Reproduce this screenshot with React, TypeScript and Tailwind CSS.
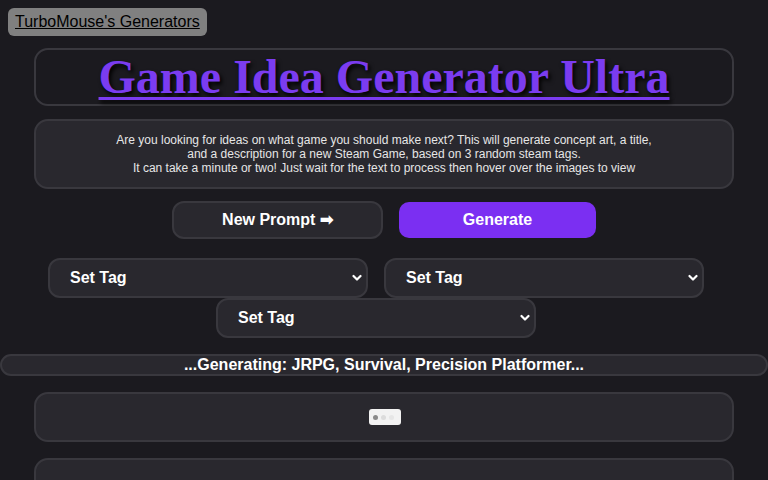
import React from "react";

const tags = ["Set Tag", "Set Tag", "Set Tag"];

function TagSelect() {
  return (
    <div className="relative mr-4 w-[320px] h-10">
      <select
        defaultValue=""
        className="appearance-none block w-full h-full rounded-xl border-2 border-[#39383e] bg-[#29282e] pl-5 text-base font-bold text-white outline-none"
      >
        <option value="">Set Tag</option>
      </select>
      {/* chevron overlay */}
      <svg
        className="pointer-events-none absolute right-[6px] top-[16px]"
        width="10"
        height="8"
        viewBox="0 0 10 8"
      >
        <path d="M1.5 2 L5 5.5 L8.5 2" fill="none" stroke="#fff" strokeWidth="2.2" strokeLinecap="round" strokeLinejoin="round" />
      </svg>
    </div>
  );
}

export default function App() {
  return (
    <div className="min-h-screen bg-[#1b1a1f] p-2 font-['Liberation_Sans',Arial,sans-serif] text-white">
      {/* ── Home link ─────────────────────────────────────────── */}
      <a
        href="#"
        className="inline-block h-7 rounded-md bg-[#808080] px-[7px] text-base leading-7 text-black underline"
      >
        TurboMouse's Generators
      </a>

      {/* ── Title ─────────────────────────────────────────────── */}
      <div className="mx-auto mt-3 w-[700px] rounded-[14px] border-2 border-[#39383e] text-center">
        <a
          href="#"
          className="font-['Liberation_Serif','Times_New_Roman',serif] text-5xl font-bold leading-[54px] text-[#7b3cf0] underline decoration-[3px] underline-offset-[4px] [text-shadow:2px_3px_4px_#000]"
        >
          Game Idea Generator Ultra
        </a>
      </div>

      {/* ── Description ───────────────────────────────────────── */}
      <div className="mx-auto mt-[13px] w-[700px] rounded-[14px] border-2 border-[#39383e] bg-[#29282e] py-3 text-center text-xs leading-[14px] text-[#e6e6e6]">
        Are you looking for ideas on what game you should make next? This will generate concept art, a title,
        <br />
        and a description for a new Steam Game, based on 3 random steam tags.
        <br />
        It can take a minute or two! Just wait for the text to process then hover over the images to view
      </div>

      {/* ── Buttons ───────────────────────────────────────────── */}
      <div className="mt-3 flex items-center justify-center gap-4">
        <button className="h-[38px] w-[211px] rounded-xl border-2 border-[#39383e] bg-[#29282e] text-base font-bold text-white">
          New Prompt ➡
        </button>
        <button className="h-9 w-[197px] rounded-[10px] bg-[#7b2ff2] text-base font-bold text-white">
          Generate
        </button>
      </div>

      {/* ── Tag selects ───────────────────────────────────────── */}
      <div className="mx-auto mt-[19px] flex w-[672px] flex-wrap justify-center">
        {tags.map((t, i) => (
          <TagSelect key={i} />
        ))}
      </div>

      {/* ── Status bar ────────────────────────────────────────── */}
      <div className="-mx-2 mt-4 h-[22px] rounded-full border-2 border-[#39383e] bg-[#29282e] text-center text-base font-bold leading-[18px] text-white">
        ...Generating: JRPG, Survival, Precision Platformer...
      </div>

      {/* ── Result cards ──────────────────────────────────────── */}
      <div className="mx-auto mt-4 flex h-[50px] w-[700px] items-center justify-center rounded-[14px] border-2 border-[#39383e] bg-[#29282e]">
        <div className="ml-[2px] flex h-4 w-8 items-center gap-[3px] rounded-[3px] bg-[#f2f2f2] pl-[4px]">
          <span className="h-[5px] w-[5px] rounded-full bg-[#8a8a8a]" />
          <span className="h-[5px] w-[5px] rounded-full bg-[#dcdcdc]" />
          <span className="h-[5px] w-[5px] rounded-full bg-[#e6e6e6]" />
        </div>
      </div>

      <div className="mx-auto mt-4 h-[200px] w-[700px] rounded-[14px] border-2 border-[#39383e] bg-[#29282e]" />
    </div>
  );
}
